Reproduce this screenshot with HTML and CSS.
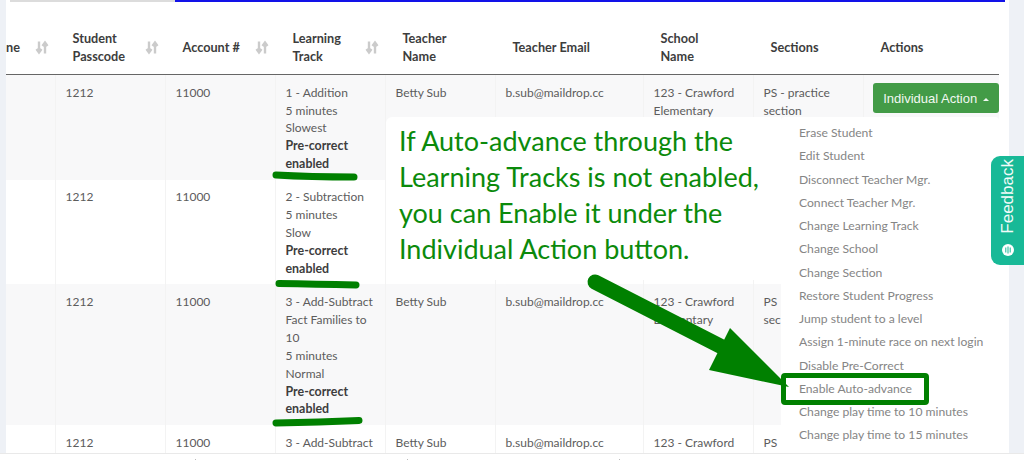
FILE: index.html
```html
<!DOCTYPE html>
<html lang="en">
<head>
<meta charset="utf-8">
<title>Students</title>
<link rel="stylesheet" href="styles.css">
</head>
<body>
<div class="page">
  <div class="shell">
    <main class="panel">
      <div class="tabs"><span class="tab-grey"></span><span class="tab-blue"></span></div>
      <table class="grid">
        <colgroup>
          <col class="c-first"><col class="c"><col class="c"><col class="c"><col class="c"><col class="c-email"><col class="c"><col class="c"><col class="c-last">
        </colgroup>
        <thead>
          <tr>
            <th class="th-first">ne<svg class="sort" viewBox="0 0 14 14"><path d="M4 1v10M1.500 8.500 4 12l2.500-3.500M10 13V3M7.500 5.500 10 2l2.500 3.500" fill="none" stroke="#cbcbcb" stroke-width="2.400"/></svg></th>
            <th>Student Passcode<svg class="sort" viewBox="0 0 14 14"><path d="M4 1v10M1.500 8.500 4 12l2.500-3.500M10 13V3M7.500 5.500 10 2l2.500 3.500" fill="none" stroke="#cbcbcb" stroke-width="2.400"/></svg></th>
            <th>Account #<svg class="sort" viewBox="0 0 14 14"><path d="M4 1v10M1.500 8.500 4 12l2.500-3.500M10 13V3M7.500 5.500 10 2l2.500 3.500" fill="none" stroke="#cbcbcb" stroke-width="2.400"/></svg></th>
            <th>Learning Track<svg class="sort" viewBox="0 0 14 14"><path d="M4 1v10M1.500 8.500 4 12l2.500-3.500M10 13V3M7.500 5.500 10 2l2.500 3.500" fill="none" stroke="#cbcbcb" stroke-width="2.400"/></svg></th>
            <th>Teacher Name</th>
            <th>Teacher Email</th>
            <th>School Name</th>
            <th>Sections</th>
            <th>Actions</th>
          </tr>
        </thead>
        <tbody>
          <tr class="odd">
            <td></td><td>1212</td><td>11000</td>
            <td>1 - Addition<br>5 minutes<br>Slowest<br><b>Pre-correct enabled</b></td>
            <td>Betty Sub</td><td>b.sub@maildrop.cc</td><td>123 - Crawford Elementary</td><td>PS - practice section</td>
            <td class="td-action"><button class="action" type="button">Individual Action <span class="caret"></span></button></td>
          </tr>
          <tr>
            <td></td><td>1212</td><td>11000</td>
            <td>2 - Subtraction<br>5 minutes<br>Slow<br><b>Pre-correct enabled</b></td>
            <td></td><td></td><td></td><td></td><td></td>
          </tr>
          <tr class="odd">
            <td></td><td>1212</td><td>11000</td>
            <td>3 - Add-Subtract Fact Families to 10<br>5 minutes<br>Normal<br><b>Pre-correct enabled</b></td>
            <td>Betty Sub</td><td>b.sub@maildrop.cc</td><td>123 - Crawford Elementary</td><td>PS<br>sec</td><td></td>
          </tr>
          <tr>
            <td></td><td>1212</td><td>11000</td>
            <td>3 - Add-Subtract</td>
            <td>Betty Sub</td><td>b.sub@maildrop.cc</td><td>123 - Crawford</td><td>PS</td><td></td>
          </tr>
        </tbody>
      </table>
      <ul class="menu">
        <li>Erase Student</li>
        <li>Edit Student</li>
        <li>Disconnect Teacher Mgr.</li>
        <li>Connect Teacher Mgr.</li>
        <li>Change Learning Track</li>
        <li>Change School</li>
        <li>Change Section</li>
        <li>Restore Student Progress</li>
        <li>Jump student to a level</li>
        <li>Assign 1-minute race on next login</li>
        <li>Disable Pre-Correct</li>
        <li>Enable Auto-advance</li>
        <li>Change play time to 10 minutes</li>
        <li>Change play time to 15 minutes</li>
      </ul>
    </main>
  </div>
  <footer class="foot"><i></i><i></i><i></i></footer>

  <div class="note">If Auto-advance through the<br>Learning Tracks is not enabled,<br>you can Enable it under the<br>Individual Action button.</div>

  <svg class="marks" viewBox="0 0 1024 460" aria-hidden="true">
    <g fill="none" stroke="#008000" stroke-linecap="round">
      <path d="M276 175 Q310 177 354 177" stroke-width="7"/>
      <path d="M279 283.500 Q315 284 356 285" stroke-width="7"/>
      <path d="M276 423 Q320 422 359 420.500" stroke-width="7"/>
    </g>
    <path d="M595 282 L722 347" fill="none" stroke="#008000" stroke-width="15" stroke-linecap="round"/>
    <polygon points="730,328 789,387 709,370" fill="#008000"/>
    <rect x="783.500" y="375.500" width="143" height="27" rx="1.500" fill="none" stroke="#008000" stroke-width="5"/>
  </svg>

  <aside class="feedback">
    <span class="fb-text">Feedback</span>
    <svg class="fb-icon" viewBox="0 0 12 12"><circle cx="6" cy="6" r="6" fill="#fff"/><path d="M3.800 3.500v5M6 2.500v7M8.200 3.500v5" stroke="#18b997" stroke-width="1"/></svg>
  </aside>
</div>
</body>
</html>
```
FILE: styles.css
```css
* { box-sizing: border-box; }
html, body { margin: 0; padding: 0; }
body { font-family: "Lato", "Noto Sans", "Liberation Sans", sans-serif; background: #fff; color: #5c5c5c; }
.page { position: relative; width: 1024px; height: 460px; overflow: hidden; background: #fff; }
.shell { height: 453px; padding: 0 15px 0 6px; background: #eef1f6; overflow: hidden; }
.panel { position: relative; height: 453px; background: #fff; overflow: hidden; }
.tabs { display: flex; height: 1.500px; padding: 0 4px; }
.tab-grey { width: 165px; background: #dcdcdc; }
.tab-blue { flex: 1; background: #1212e8; }
.grid { width: 993px; table-layout: fixed; border-collapse: collapse; font-size: 12px; line-height: 17.900px; }
.c-first { width: 49.500px; }
.c { width: 110px; }
.c-email { width: 148px; }
.c-last { width: 135.500px; }
th { position: relative; height: 72.800px; padding: 21px 32px 0 17px; text-align: left; font-size: 12.700px; font-weight: 700; color: #3d3d3d; border-bottom: 1px solid #666; vertical-align: middle; }
.th-first { padding: 21px 0 0; }
.sort { position: absolute; right: 7px; top: 38px; width: 14px; height: 15px; }
td { padding: 8.800px 10px 6.400px 9.500px; vertical-align: top; border-left: 1px solid #f3f3f3; }
td:first-child { border-left: 0; }
td b { font-size: 12.400px; color: #3d3d3d; }
.odd td { background: #f8f8f9; }
.td-action { padding-left: 9px; padding-right: 0; }
.action { display: block; width: 126px; height: 30.500px; margin-top: -1px; border: 0; border-radius: 3px; background: #439b47; color: #f2f8f2; font: 13px "Liberation Sans", Arial, sans-serif; padding: 1px 0 0; }
.caret { display: inline-block; width: 0; height: 0; margin-left: 2px; vertical-align: 2px; border-left: 3.500px solid transparent; border-right: 3.500px solid transparent; border-bottom: 3.500px solid #f2f8f2; }
.menu { position: absolute; left: 775px; top: 117px; width: 218px; height: 336px; margin: 0; padding: 4px 0 0 18px; list-style: none; background: #fff; border-radius: 4px; font-size: 12.150px; line-height: 23.270px; color: #858585; white-space: nowrap; }
.note { position: absolute; left: 386px; top: 117px; width: 395px; height: 163px; padding: 6px 0 0 13px; background: rgba(255,255,255,.97); border-radius: 6px 0 0 6px; color: #0b8a0b; font: 27px/36px "Lato", "Open Sans", sans-serif; white-space: nowrap; }
.marks { position: absolute; left: 0; top: 0; width: 1024px; height: 460px; }
.feedback { position: absolute; right: 0; top: 156px; width: 33px; height: 109px; display: flex; flex-direction: column; align-items: center; background: #18b997; border-radius: 9px 0 0 9px; color: #f2fbf9; }
.fb-text { margin-top: 3px; writing-mode: vertical-rl; transform: rotate(180deg); font: 17px/33px "Liberation Sans", Arial, sans-serif; }
.fb-icon { width: 12px; height: 12px; margin-top: 10px; }
.foot { display: flex; gap: 211px; height: 7px; padding: 5px 0 0 195px; border-top: 1px solid #e9e9e9; }
.foot i { display: block; width: 1px; height: 2px; background: #bbb; }
```
